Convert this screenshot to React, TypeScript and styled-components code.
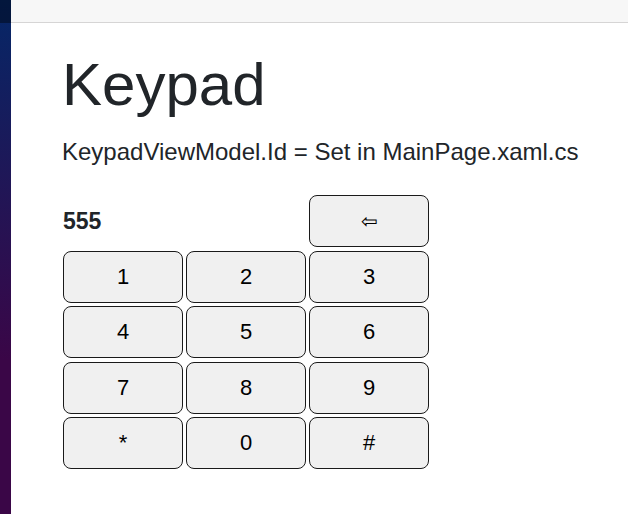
import React from "react";
import styled, { createGlobalStyle } from "styled-components";

const GlobalStyle = createGlobalStyle`
  html, body {
    margin: 0;
    padding: 0;
    background: #fff;
    font-family: "Liberation Sans", Arial, sans-serif;
  }
`;

const Page = styled.div`
  display: flex;
  min-height: 514px;
`;

const Sidebar = styled.nav`
  width: 11px;
  display: flex;
  flex-direction: column;
  background-image: linear-gradient(180deg, rgb(5, 39, 103) 0%, #3a0647 70%);
`;

const SidebarTop = styled.div`
  height: 23px;
  background-color: rgba(0, 0, 0, 0.4);
`;

const Main = styled.main`
  flex: 1;
  display: flex;
  flex-direction: column;
`;

const TopRow = styled.div`
  height: 22px;
  background-color: #f7f7f7;
  border-bottom: 1px solid #d6d5d5;
`;

const Content = styled.article`
  padding: 26px 0 0 51px;
  color: #212529;
`;

const Title = styled.h1`
  margin: 0 0 13px;
  font-size: 60px;
  font-weight: 400;
  line-height: 1.2;
`;

const Intro = styled.p`
  margin: 0 0 25px;
  font-size: 24px;
  line-height: 1.5;
`;

const Keys = styled.div`
  display: grid;
  grid-template-columns: repeat(3, 120px);
  grid-auto-rows: 52px;
  column-gap: 3px;
  row-gap: 3.5px;
  margin-left: 1px;
`;

const Display = styled.div`
  grid-column: span 2;
  display: flex;
  align-items: center;
  font-size: 23px;
  font-weight: 700;
  color: #212529;
`;

const Key = styled.button<{ $small?: boolean }>`
  font-family: "Liberation Sans", Arial, sans-serif;
  font-size: ${(p) => (p.$small ? "20px" : "22px")};
  color: #000;
  background: #f0f0f0;
  border: 1px solid #1a1a1a;
  border-radius: 8px;
  padding: 0;
`;

const keys = ["1", "2", "3", "4", "5", "6", "7", "8", "9", "*", "0", "#"];

export default function App() {
  return (
    <Page>
      <GlobalStyle />
      <Sidebar>
        <SidebarTop />
      </Sidebar>
      <Main>
        <TopRow />
        <Content>
          <Title>Keypad</Title>
          <Intro>KeypadViewModel.Id = Set in MainPage.xaml.cs</Intro>
          <Keys>
            <Display>555</Display>
            <Key $small>⇦</Key>
            {keys.map((k) => (
              <Key key={k}>{k}</Key>
            ))}
          </Keys>
        </Content>
      </Main>
    </Page>
  );
}
